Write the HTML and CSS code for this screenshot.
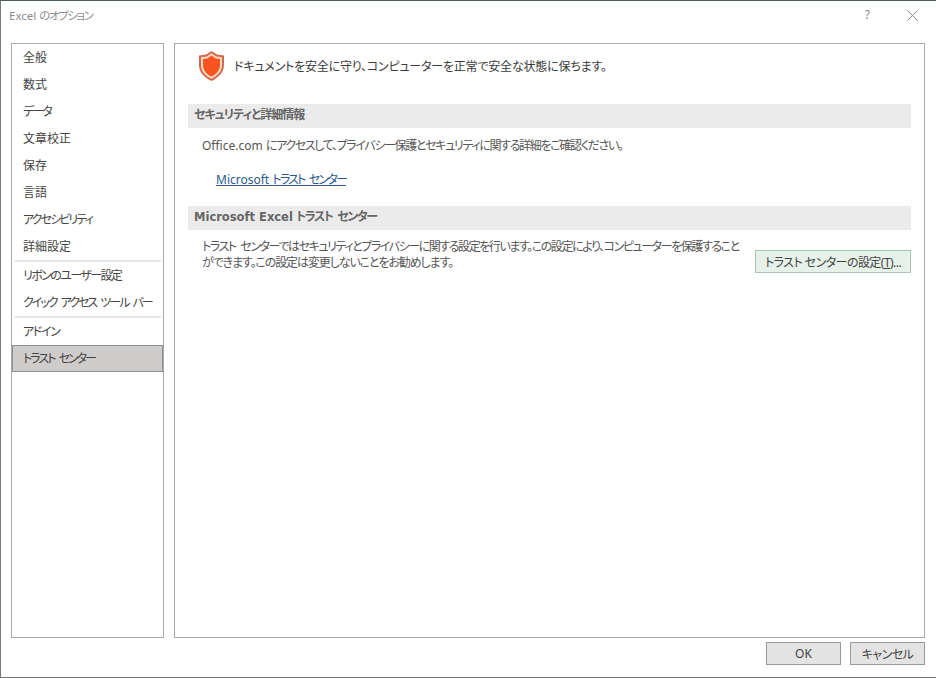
FILE: index.html
```html
<!DOCTYPE html>
<html lang="ja">
<head>
<meta charset="utf-8">
<title>Excel のオプション</title>
<link rel="stylesheet" href="styles.css">
</head>
<body>
<div class="dialog">
  <header class="titlebar">
    <span class="title">Excel <span class="kana-m">のオプション</span></span>
    <span class="help">?</span>
    <svg class="close" width="11" height="11" viewBox="0 0 11 11"><path d="M0.5 0.5L10.5 10.5M10.5 0.5L0.5 10.5" stroke="#8a8a8a" stroke-width="1" fill="none"/></svg>
  </header>
  <div class="panes">
    <nav class="nav">
      <div class="nav-item">全般</div>
      <div class="nav-item">数式</div>
      <div class="nav-item kana-l">データ</div>
      <div class="nav-item">文章校正</div>
      <div class="nav-item">保存</div>
      <div class="nav-item">言語</div>
      <div class="nav-item kana-l">アクセシビリティ</div>
      <div class="nav-item">詳細設定</div>
      <div class="nav-sep"></div>
      <div class="nav-item kana-ml">リボンのユーザー設定</div>
      <div class="nav-item kana-spaced">クイック アクセス ツール バー</div>
      <div class="nav-sep"></div>
      <div class="nav-item kana-m">アドイン</div>
      <div class="nav-item selected kana-spaced">トラスト センター</div>
    </nav>
    <main class="content">
      <div class="lead">
        <svg class="shield" width="25" height="30" viewBox="0 0 25 30">
          <path d="M12.500 0L18 3.500L25 4.500V14C25 22 19 26.500 12.500 30C6 26.500 0 22 0 14V4.500L7 3.500Z" fill="#cf6a4c"/>
          <path d="M12.500 2.200L17.400 5.400L23 6.200V14C23 21 18 25 12.500 27.800C7 25 2 21 2 14V6.200L7.600 5.400Z" fill="#fbd9c2"/>
          <path d="M12.500 4.600L16.800 7.400L21 8V14C21 19.600 17 23.400 12.500 25.600C8 23.400 4 19.600 4 14V8L8.200 7.400Z" fill="#f7541f"/>
        </svg>
        <span class="lead-text">ドキュメントを安全に守り、コンピューターを正常で安全な状態に保ちます。</span>
      </div>
      <h2 class="section first kana-s">セキュリティと詳細情報</h2>
      <p class="para office">Office.com <span class="kana-sm">にアクセスして、プライバシー保護とセキュリティに関する詳細をご確認ください。</span></p>
      <a class="link" href="#">Microsoft <span class="kana-link">トラスト センター</span></a>
      <h2 class="section second"><span class="latin-bold">Microsoft Excel</span> <span class="kana-m spaced">トラスト センター</span></h2>
      <div class="trust">
        <p class="para trust-text"><span class="trust-line1">トラスト センターではセキュリティとプライバシーに関する設定を行います。この設定により、コンピューターを保護すること</span><br><span class="trust-line2">ができます。この設定は変更しないことをお勧めします。</span></p>
        <button class="btn settings"><span class="kana-xs">トラスト センターの設定(<u>T</u>)...</span></button>
      </div>
    </main>
  </div>
  <footer class="footer">
    <button class="btn plain">OK</button>
    <button class="btn plain"><span class="kana-xs">キャンセル</span></button>
  </footer>
</div>
</body>
</html>
```
FILE: styles.css
```css
* { box-sizing: border-box; }
html, body { margin: 0; padding: 0; }
body {
  width: 936px;
  height: 678px;
  overflow: hidden;
  background: #fff;
  color: #444;
  font-family: "Noto Sans", "Noto Sans CJK JP", sans-serif;
  font-size: 12px;
  font-feature-settings: "palt";
}
.kana-xs { letter-spacing: -0.55px; }
.kana-s { letter-spacing: -1px; }
.kana-sm { letter-spacing: -1.33px; word-spacing: 3px; }
.kana-m { letter-spacing: -1.4px; }
.kana-ml { letter-spacing: -1.6px; }
.kana-l { letter-spacing: -1.9px; }
.kana-spaced { letter-spacing: -2px; word-spacing: 3px; }
.kana-link { letter-spacing: -1.8px; word-spacing: 3px; }
.spaced { word-spacing: 3px; }
.trust-line1 { letter-spacing: -1.43px; word-spacing: 3px; }
.trust-line2 { letter-spacing: -1.1px; }
.latin-bold { font-family: "DejaVu Sans", sans-serif; font-size: 11.5px; }
.dialog {
  width: 936px;
  height: 678px;
  display: flex;
  flex-direction: column;
  border-top: 1px solid #4a5f58;
  border-left: 1px solid #777;
  border-bottom: 1px solid #777;
  padding: 0 11px 0 10px;
}
.titlebar {
  height: 42px;
  display: flex;
  align-items: flex-start;
  flex: none;
}
.title { color: #8c8c8c; font-size: 11.5px; line-height: 14px; margin-top: 8px; margin-left: -2px; }
.help { margin-left: auto; margin-top: 6px; color: #888; font-size: 12px; line-height: 16px; margin-right: -1px; }
.close { margin-left: 38px; margin-top: 9px; margin-right: 7px; }
.panes { display: flex; gap: 10px; height: 595px; flex: none; }
.nav {
  width: 153px;
  border: 1px solid #a9a9a9;
}
.nav-item {
  height: 27px;
  padding-left: 11px;
  line-height: 27px;
  color: #444;
  white-space: nowrap;
}
.nav-sep { height: 2px; margin: 0 2px; background: #e6e6e6; }
.nav-item.selected {
  background: #cfcccc;
  border: 1px solid #8f8f8f;
  padding-left: 10px;
  line-height: 25px;
}
.content {
  width: 751px;
  border: 1px solid #a9a9a9;
  padding: 0 13px;
  display: flex;
  flex-direction: column;
}
.lead {
  display: flex;
  align-items: center;
  gap: 10px;
  height: 44px;
  padding-left: 11px;
  color: #3a3a3a;
}
.lead-text { letter-spacing: -0.2px; }
.shield { flex: none; }
.section {
  margin: 0;
  height: 24px;
  line-height: 21px;
  padding-left: 6px;
  font-size: 12px;
  font-weight: 700;
  color: #666;
  background: #ebebeb;
}
.first { margin-top: 16px; }
.second { margin-top: 18px; line-height: 21px; }
.para { margin: 0; color: #555; line-height: 16px; }
.office { margin: 10px 0 0 14px; line-height: 16px; }
.link {
  margin: 18px 0 0 28px;
  color: #2a5b8a;
  line-height: 16px;
  align-self: flex-start;
}
.trust {
  display: flex;
  align-items: flex-start;
  justify-content: space-between;
  padding: 9px 0 0 14px;
}
.trust-text { width: 540px; white-space: nowrap; }
.btn {
  font: inherit;
  font-feature-settings: "palt";
  color: #444;
  border: 1px solid #a5a5a5;
  padding: 0;
  height: 23px;
}
.settings {
  width: 156px;
  margin-top: 11px;
  background: #e6f1e9;
  border-color: #a8c4b2;
}
.footer {
  flex: 1;
  display: flex;
  justify-content: flex-end;
  gap: 9px;
  padding-top: 4px;
}
.plain { width: 75px; background: #e3e3e3; border-color: #9a9a9a; }
```
